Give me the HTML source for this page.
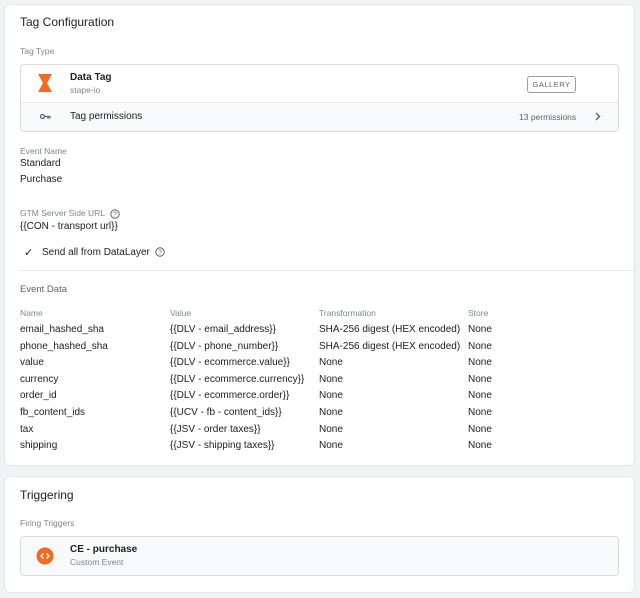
<!DOCTYPE html><html><head><style>
body{margin:0;background:#f1f3f4;font-family:"Liberation Sans",sans-serif;color:#202124;width:640px;height:598px;position:relative;overflow:hidden}
.a{position:absolute;white-space:nowrap}
.card{position:absolute;background:#fff;border:1px solid #e3e5e8;border-radius:6px}
.lbl{color:#80868b;font-size:8.5px}
.t{font-size:10px}
.q{display:inline-block;vertical-align:middle;margin-left:5px}
</style></head><body>
<div class="card" style="left:4px;top:4px;width:629px;height:460px"></div>
<div class="a" style="left:20px;top:15px;font-size:12px">Tag Configuration</div>
<div class="a lbl" style="left:20px;top:46px">Tag Type</div>
<div class="a" style="left:20px;top:64px;width:597px;height:66px;border:1px solid #dadce0;border-radius:4px;background:#fff"></div>
<div class="a" style="left:21px;top:102px;width:597px;height:28px;background:#f8f9fa;border-top:1px solid #e8eaed;border-radius:0 0 4px 4px"></div>
<svg class="a" style="left:38px;top:74px" width="14" height="18" viewBox="0 0 14 18"><path d="M0 0H14L9 9L14 18H0L5 9Z" fill="#f26b21"/></svg>
<div class="a" style="left:70px;top:72px;font-size:10px;font-weight:bold">Data Tag</div>
<div class="a lbl" style="left:70px;top:85px">stape-io</div>
<div class="a" style="left:527px;top:76px;width:47px;height:15px;border:1px solid #9aa0a6;border-radius:3px;font-size:7.5px;color:#5f6368;text-align:center;line-height:15px;letter-spacing:.5px">GALLERY</div>
<svg class="a" style="left:40px;top:113px" width="11" height="7" viewBox="0 0 11 7"><circle cx="2.5" cy="3.5" r="2" fill="none" stroke="#5f6368" stroke-width="1.3"/><path d="M4.5 3.5H10.5M8 3.5V6M10 3.5V5.5" stroke="#5f6368" stroke-width="1.3" fill="none"/></svg>
<div class="a t" style="left:70px;top:111px">Tag permissions</div>
<div class="a" style="left:519px;top:112px;font-size:8.5px;color:#5f6368">13 permissions</div>
<svg class="a" style="left:595px;top:112px" width="6" height="9" viewBox="0 0 6 9"><path d="M1 1L4.5 4.5L1 8" stroke="#5f6368" stroke-width="1.4" fill="none"/></svg>
<div class="a lbl" style="left:20px;top:146px">Event Name</div>
<div class="a t" style="left:20px;top:158px">Standard</div>
<div class="a t" style="left:20px;top:174px">Purchase</div>
<div class="a lbl" style="left:20px;top:208px">GTM Server Side URL<svg class="q" width="10" height="10"><circle cx="5" cy="5" r="4.2" fill="none" stroke="#5f6368"/><text x="5" y="7.5" font-size="7" text-anchor="middle" fill="#5f6368" font-family="Liberation Sans">?</text></svg></div>
<div class="a t" style="left:20px;top:221px">{{CON - transport url}}</div>
<div class="a" style="left:24px;top:246px;font-size:11px">✓</div>
<div class="a t" style="left:42px;top:247px">Send all from DataLayer<svg class="q" width="10" height="10"><circle cx="5" cy="5" r="4.2" fill="none" stroke="#5f6368"/><text x="5" y="7.5" font-size="7" text-anchor="middle" fill="#5f6368" font-family="Liberation Sans">?</text></svg></div>
<div class="a" style="left:20px;top:270px;width:614px;height:1px;background:#e8eaed"></div>
<div class="a" style="left:20px;top:284px;font-size:9.5px;color:#5f6368">Event Data</div>
<div class="a lbl" style="left:20px;top:308px">Name</div>
<div class="a lbl" style="left:170px;top:308px">Value</div>
<div class="a lbl" style="left:319px;top:308px">Transformation</div>
<div class="a lbl" style="left:468px;top:308px">Store</div>
<div class="a t" style="left:20px;top:322px;line-height:16.6px">email_hashed_sha<br>phone_hashed_sha<br>value<br>currency<br>order_id<br>fb_content_ids<br>tax<br>shipping</div>
<div class="a t" style="left:170px;top:322px;line-height:16.6px">{{DLV - email_address}}<br>{{DLV - phone_number}}<br>{{DLV - ecommerce.value}}<br>{{DLV - ecommerce.currency}}<br>{{DLV - ecommerce.order}}<br>{{UCV - fb - content_ids}}<br>{{JSV - order taxes}}<br>{{JSV - shipping taxes}}</div>
<div class="a t" style="left:319px;top:322px;line-height:16.6px">SHA-256 digest (HEX encoded)<br>SHA-256 digest (HEX encoded)<br>None<br>None<br>None<br>None<br>None<br>None</div>
<div class="a t" style="left:468px;top:322px;line-height:16.6px">None<br>None<br>None<br>None<br>None<br>None<br>None<br>None</div>
<div class="card" style="left:4px;top:476px;width:629px;height:115px"></div>
<div class="a" style="left:20px;top:488px;font-size:12px">Triggering</div>
<div class="a lbl" style="left:20px;top:518px">Firing Triggers</div>
<div class="a" style="left:20px;top:536px;width:597px;height:38px;border:1px solid #dadce0;border-radius:4px;background:#f8f9fa"></div>
<svg class="a" style="left:36px;top:547px" width="18" height="18"><circle cx="9" cy="9" r="8.5" fill="#f26b21"/><path d="M7.5 6.5L5 9L7.5 11.5M10.5 6.5L13 9L10.5 11.5" stroke="#fff" stroke-width="1.3" fill="none"/></svg>
<div class="a" style="left:70px;top:544px;font-size:10px;font-weight:bold">CE - purchase</div>
<div class="a lbl" style="left:70px;top:557px">Custom Event</div>
</body></html>
